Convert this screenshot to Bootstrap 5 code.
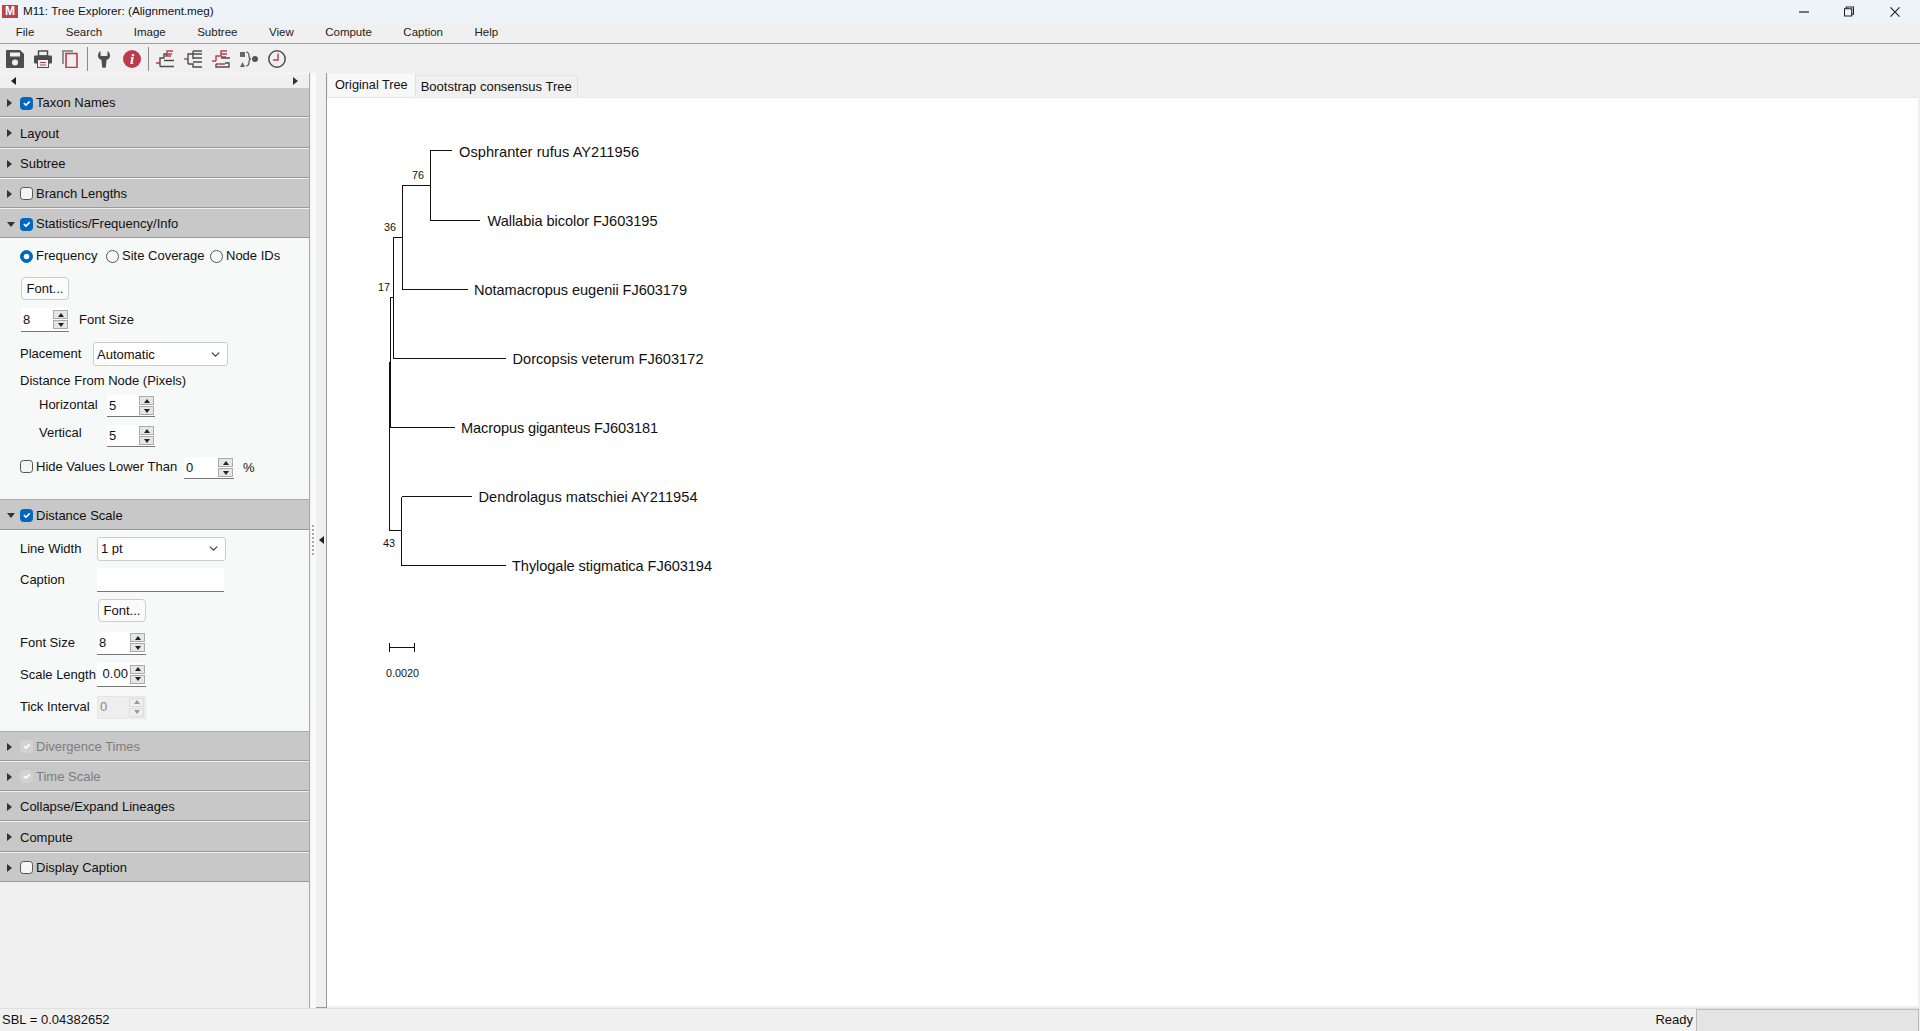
<!DOCTYPE html>
<html lang="en">
<head>
<meta charset="utf-8">
<title>M11: Tree Explorer</title>
<link href="https://cdn.jsdelivr.net/npm/bootstrap@5.3.0/dist/css/bootstrap.min.css" rel="stylesheet">
<style>
html,body{height:100%;margin:0}
body{width:1920px;height:1031px;overflow:hidden;background:#f0f0f0;color:#111;font-family:"Liberation Sans",sans-serif;font-size:13px;line-height:1.2}
.titlebar{height:23px;background:#eef3fa;font-size:11.7px}
.applogo{width:16px;height:13px;margin-left:2px;margin-right:5px;background:#b9434b;color:#fff;font:bold 12px/13px "Liberation Sans",sans-serif;text-align:center}
.winctl{padding-right:20px;gap:35px}
.restoreicon{margin-right:1px}
.menubar{height:21px;border-bottom:1.5px solid #a0a0a0;padding-left:0}
.menubar .nav-link{padding:0 15.75px;color:#222;font-size:11.5px}
.toolrow{height:29px;padding-left:6px;gap:10px}
.toolsep{width:1px;height:24px;background:#888;margin:0 -3px}
.workspace{height:935px}
.sidepane{width:310px;border-right:1.5px solid #aaa}
.hscroll{height:15px;padding:0 11px;background:#f0f0f0;border-top:1px solid #f8f8f8}
.arr-l{border-style:solid;border-width:4px 5px 4px 0;border-color:transparent #222 transparent transparent}
.arr-r{border-style:solid;border-width:4px 0 4px 5px;border-color:transparent transparent transparent #333}
.arr-d{border-style:solid;border-width:5px 4px 0 4px;border-color:#333 transparent transparent transparent}
.panelhead{height:29.25px;margin-bottom:1px;background:#c8c8c8;border-bottom:1.5px solid #999;padding-left:7px;padding-top:2px;font-size:13px}
.panelhead .twist{width:13px;flex:none}
.panelhead .form-check-input{margin-right:3px}
.panelhead.dim{color:#7d7d7d}
.form-check-input{width:13px;height:13px;margin:0;flex:none;border:1px solid #555;border-radius:3px;background-color:#f5f5f5}
.form-check-input[type=radio]{border-radius:50%;background-color:#f8f8f8}
.form-check-input:checked{background-color:#0067c0;border-color:#0067c0}
.form-check-input:disabled{opacity:1;background-color:#d2d2d2;border-color:#d2d2d2}
.panelbody{background:#f7f9f9;border-bottom:1px solid #aaa;padding-left:20px;font-size:13px}
.statbody{padding-top:8px;height:262px}
.distbody{padding-top:7px;height:202px}
.rowh{height:24px}
.rowg{height:22px}
.rowf{height:23px}
.gaplabel{margin-left:3px}
.fontbtn{width:48px;height:23px;padding:0;font-size:13px;line-height:1;background:#fbfbfb;border:1px solid #ccc;border-radius:4px;color:#111}
.spinbox{height:100%;background:#fff;border-bottom:1.5px solid #777;padding:0 1px 0 2px}
.spinbox.off{background:#eee;border:1px solid #e6e6e6;color:#888}
.spinval{flex:1;font-size:13px}
.spinbtns{width:15px;height:19px;gap:1px}
.spinbtn{flex:1;background:#e6e6e6;border:1px solid #aaa;display:flex;align-items:center;justify-content:center}
.off .spinbtn{border-color:#ddd;background:#eee}
.tup{border-style:solid;border-width:0 3px 4px 3px;border-color:transparent transparent #222 transparent}
.tdn{border-style:solid;border-width:4px 3px 0 3px;border-color:#222 transparent transparent transparent}
.off .tup{border-bottom-color:#999}.off .tdn{border-top-color:#999}
.form-select{height:100%;min-height:0;padding:0 0 0 3px;font-size:13px;color:#111;border:1px solid #ccc;border-radius:3px;background-position:right 6px center;background-size:11px 9px;line-height:1}
.capinput{width:127px;height:100%;background:#fff;border-bottom:1.5px solid #777}
.splitter{width:17px;padding-left:1px}
.griprail{flex:0 0 5px;height:100%;background:#fafafa;position:relative}
.gripdots{position:absolute;top:452px;left:1px;width:2px;height:32px;background:repeating-linear-gradient(#a8a8a8 0 2px,transparent 2px 4px)}
.sashbar{flex:0 0 11px;background:#f0f0f0;border-right:1.5px solid #999;border-bottom:1.5px solid #999}
.mainpane{flex:1;min-width:0;padding-right:2px;padding-bottom:2px}
.tabrow{height:24px;border:0;padding-left:1px;align-items:flex-end}
.tabrow .nav-link{padding:0 5px;border-radius:0;border:0;font-size:13px;color:#111;height:22px;line-height:22px;background:#f0f0f0;margin:0;border-right:1px solid #e0e0e0;border-top:1px solid #e6e6e6}
.tabrow .nav-link.active{height:24px;line-height:22px;padding:0 7px;background:#f8f8f8;border-top:1px solid #f4f4f4;border-right:1px solid #e0e0e0;color:#111;font-size:12.7px}
.treecanvas{flex:1;background:#fff;border-top:1px solid #e8e8e8;overflow:hidden}
.treecanvas svg{display:block}
.tlabel{font:14.6px "Liberation Sans",sans-serif;fill:#111}
.nlabel{font:10.8px "Liberation Sans",sans-serif;fill:#111}
.statusrow{height:23px;border-top:1.5px solid #e0e0e0;font-size:13px;padding-left:2px}
.statusrow .readytxt{margin-left:auto;margin-right:3px}
.statusfill{width:223px;height:100%;background:#e4e4e4;border:1px solid #bbb;margin-right:1px;border-bottom:0}
.lw68{width:68px}.lw77{flex:0 0 77px}
.up3{margin-bottom:3px}.up6{margin-bottom:6px}
.gl{stroke:#222;stroke-width:1.25;fill:none}
.tk{stroke:#4d4d4d;stroke-width:1.4;fill:none}
.tr{stroke:#b93e4c;stroke-width:1.4;fill:none}
.crisp{shape-rendering:crispEdges}
</style>
</head>
<body class="d-flex flex-column">

<div class="titlebar d-flex align-items-center">
  <span class="applogo">M</span>
  <span>M11: Tree Explorer: (Alignment.meg)</span>
  <div class="winctl d-flex align-items-center ms-auto">
    <svg width="10" height="10" viewBox="0 0 10 10"><path class="gl" d="M0 5h10"/></svg>
    <svg class="restoreicon" width="10" height="11" viewBox="0 0 11 11"><path class="gl" d="M.5 2.500h8v8h-8zM2.500 2.500V.5h8v8h-2"/></svg>
    <svg width="10" height="10" viewBox="0 0 11 11"><path class="gl" d="M.5.5l10 10M10.500.5l-10 10"/></svg>
  </div>
</div>

<nav class="menubar nav flex-nowrap align-items-center">
  <a class="nav-link" href="#">File</a><a class="nav-link" href="#">Search</a><a class="nav-link" href="#">Image</a><a class="nav-link" href="#">Subtree</a><a class="nav-link" href="#">View</a><a class="nav-link" href="#">Compute</a><a class="nav-link" href="#">Caption</a><a class="nav-link" href="#">Help</a>
</nav>

<div class="toolrow d-flex align-items-center">
  <svg width="18" height="18" viewBox="0 0 18 18"><path fill="#4d4d4d" d="M1 0h13l4 4v13a1 1 0 0 1-1 1H1a1 1 0 0 1-1-1V1a1 1 0 0 1 1-1z"/><rect x="4" y="2.500" width="10" height="4" fill="#f0f0f0"/><circle cx="9" cy="12.500" r="3" fill="#f0f0f0"/></svg>
  <svg width="18" height="18" viewBox="0 0 18 18"><rect x="4.500" y="1" width="9" height="5" fill="none" stroke="#4d4d4d" stroke-width="1.500"/><rect y="5.500" width="18" height="8" rx="1" fill="#4d4d4d"/><rect x="3.500" y="9.500" width="11" height="8" fill="#f0f0f0" stroke="#4d4d4d"/><path d="M6 12.500h6M6 15h6" stroke="#b93e4c" stroke-width="1.200"/></svg>
  <svg width="18" height="18" viewBox="0 0 18 18"><path d="M11 1H1v13" fill="none" stroke="#777" stroke-width="1.500"/><rect x="4" y="3.500" width="11" height="14" fill="none" stroke="#b93e4c" stroke-width="1.600"/></svg>
  <span class="toolsep"></span>
  <svg width="18" height="18" viewBox="0 0 18 18"><path fill="#4d4d4d" d="M5.500 1C3.500 2 3 4 3 6c0 2 1.500 3 3.500 4L7 16a2 2 0 0 0 4 0l.5-6c2-1 3.500-2 3.500-4 0-2-.5-4-2.500-5v4a1 1 0 0 1-1 1h-5a1 1 0 0 1-1-1z"/></svg>
  <svg width="18" height="18" viewBox="0 0 18 18"><circle cx="9" cy="9" r="9" fill="#bb3b4c"/><text x="9" y="14" text-anchor="middle" fill="#fff" font-family="Liberation Serif, serif" font-style="italic" font-weight="700" font-size="15">i</text></svg>
  <span class="toolsep"></span>
  <svg width="18" height="18" viewBox="0 0 18 18"><path class="tr" d="M0 13h4M11 5.500V1h6M11 4h5M9 6h6"/><path class="tk" d="M4 16.500V8h4V4h3M4 16.500h14M8 10.500h10"/></svg>
  <svg width="18" height="18" viewBox="0 0 18 18"><path class="tr" d="M0 9h4"/><path class="tk" d="M4 14V4h5M4 14h5v3h9M9 1v8M9 1h9M9 4h9M9 8h9M9 12h9"/></svg>
  <svg width="18" height="18" viewBox="0 0 18 18"><path class="tr" d="M0 11h4M4 11V6h5V1h6M9 4h6M9 7h5M4 14h9"/><path class="tk" d="M4 14v3h13v-4h-4M9 8h9"/></svg>
  <svg width="18" height="18" viewBox="0 0 18 18"><rect y="2" width="5" height="5" fill="#666"/><path fill="#666" d="M0 17l2.500-5 2.500 5z"/><path d="M6 2c3 0 3 2 3 4 0 2 1 3 2 3-1 0-2 1-2 3s0 4-3 4" fill="none" stroke="#555" stroke-width="1.200"/><circle cx="15" cy="9" r="3" fill="#555"/></svg>
  <svg width="18" height="18" viewBox="0 0 18 18"><circle cx="9" cy="9" r="8.200" fill="none" stroke="#4d4d4d" stroke-width="1.500"/><path class="tr" d="M10 3.500V10H5"/></svg>
</div>

<div class="workspace d-flex">
  <aside class="sidepane d-flex flex-column">
    <div class="hscroll d-flex align-items-center justify-content-between"><span class="arr-l"></span><span class="arr-r"></span></div>

    <div class="panelhead d-flex align-items-center"><span class="twist"><span class="arr-r d-block" style="width:0"></span></span><input class="form-check-input" type="checkbox" checked aria-label="Taxon Names"><span>Taxon Names</span></div>
    <div class="panelhead d-flex align-items-center"><span class="twist"><span class="arr-r d-block" style="width:0"></span></span><span>Layout</span></div>
    <div class="panelhead d-flex align-items-center"><span class="twist"><span class="arr-r d-block" style="width:0"></span></span><span>Subtree</span></div>
    <div class="panelhead d-flex align-items-center"><span class="twist"><span class="arr-r d-block" style="width:0"></span></span><input class="form-check-input" type="checkbox" aria-label="Branch Lengths"><span>Branch Lengths</span></div>
    <div class="panelhead d-flex align-items-center mb-0"><span class="twist"><span class="arr-d d-block" style="width:0"></span></span><input class="form-check-input" type="checkbox" checked aria-label="Statistics"><span>Statistics/Frequency/Info</span></div>

    <section class="panelbody statbody d-flex flex-column">
      <div class="d-flex align-items-center" style="height:20px">
        <input class="form-check-input" type="radio" name="st" checked aria-label="Frequency"><span class="gaplabel" style="width:70px">Frequency</span>
        <input class="form-check-input" type="radio" name="st" aria-label="Site Coverage"><span class="gaplabel" style="width:88px">Site Coverage</span>
        <input class="form-check-input" type="radio" name="st" aria-label="Node IDs"><span class="gaplabel">Node IDs</span>
      </div>
      <div style="height:23px;margin-top:11px;padding-left:1px"><button class="btn fontbtn" type="button">Font...</button></div>
      <div class="d-flex align-items-center rowh" style="margin-top:8px;padding-left:1px">
        <div class="spinbox d-flex align-items-center" style="width:48px"><span class="spinval">8</span><span class="spinbtns d-flex flex-column"><span class="spinbtn"><i class="tup"></i></span><span class="spinbtn"><i class="tdn"></i></span></span></div>
        <span style="margin-left:10px">Font Size</span>
      </div>
      <div class="d-flex align-items-center rowh" style="margin-top:10px">
        <span style="width:73px">Placement</span>
        <select class="form-select" style="width:135px" aria-label="Placement"><option>Automatic</option></select>
      </div>
      <div class="d-flex align-items-center" style="height:18px;margin-top:6px">Distance From Node (Pixels)</div>
      <div class="d-flex align-items-center rowg" style="margin-top:5px;padding-left:19px">
        <span class="lw68 up3">Horizontal</span>
        <div class="spinbox d-flex align-items-center" style="width:48px"><span class="spinval">5</span><span class="spinbtns d-flex flex-column"><span class="spinbtn"><i class="tup"></i></span><span class="spinbtn"><i class="tdn"></i></span></span></div>
      </div>
      <div class="d-flex align-items-center rowg" style="margin-top:8px;padding-left:19px">
        <span class="lw68 up6">Vertical</span>
        <div class="spinbox d-flex align-items-center" style="width:48px"><span class="spinval">5</span><span class="spinbtns d-flex flex-column"><span class="spinbtn"><i class="tup"></i></span><span class="spinbtn"><i class="tdn"></i></span></span></div>
      </div>
      <div class="d-flex align-items-center rowg" style="margin-top:10px">
        <input class="form-check-input up3" type="checkbox" aria-label="Hide values"><span class="gaplabel up3" style="width:148px">Hide Values Lower Than</span>
        <div class="spinbox d-flex align-items-center" style="width:50px"><span class="spinval">0</span><span class="spinbtns d-flex flex-column"><span class="spinbtn"><i class="tup"></i></span><span class="spinbtn"><i class="tdn"></i></span></span></div>
        <span style="margin-left:9px">%</span>
      </div>
    </section>

    <div class="panelhead d-flex align-items-center mb-0"><span class="twist"><span class="arr-d d-block" style="width:0"></span></span><input class="form-check-input" type="checkbox" checked aria-label="Distance Scale"><span>Distance Scale</span></div>

    <section class="panelbody distbody d-flex flex-column">
      <div class="d-flex align-items-center rowh">
        <span class="lw77">Line Width</span>
        <select class="form-select" style="width:129px" aria-label="Line Width"><option>1 pt</option></select>
      </div>
      <div class="d-flex align-items-center rowh" style="margin-top:7px">
        <span class="lw77">Caption</span><div class="capinput"></div>
      </div>
      <div class="d-flex align-items-center rowf" style="margin-top:7px;padding-left:78px"><button class="btn fontbtn" type="button">Font...</button></div>
      <div class="d-flex align-items-center rowf" style="margin-top:10px">
        <span class="lw77">Font Size</span>
        <div class="spinbox d-flex align-items-center" style="width:49px"><span class="spinval">8</span><span class="spinbtns d-flex flex-column"><span class="spinbtn"><i class="tup"></i></span><span class="spinbtn"><i class="tdn"></i></span></span></div>
      </div>
      <div class="d-flex align-items-center rowh" style="margin-top:8px">
        <span class="lw77">Scale Length</span>
        <div class="spinbox d-flex align-items-center" style="width:49px"><span class="spinval">&nbsp;0.00</span><span class="spinbtns d-flex flex-column"><span class="spinbtn"><i class="tup"></i></span><span class="spinbtn"><i class="tdn"></i></span></span></div>
      </div>
      <div class="d-flex align-items-center rowf" style="margin-top:9px">
        <span class="lw77">Tick Interval</span>
        <div class="spinbox off d-flex align-items-center" style="width:49px"><span class="spinval">0</span><span class="spinbtns d-flex flex-column"><span class="spinbtn"><i class="tup"></i></span><span class="spinbtn"><i class="tdn"></i></span></span></div>
      </div>
    </section>

    <div class="panelhead dim d-flex align-items-center"><span class="twist"><span class="arr-r d-block" style="width:0"></span></span><input class="form-check-input" type="checkbox" checked disabled aria-label="Divergence Times"><span>Divergence Times</span></div>
    <div class="panelhead dim d-flex align-items-center"><span class="twist"><span class="arr-r d-block" style="width:0"></span></span><input class="form-check-input" type="checkbox" checked disabled aria-label="Time Scale"><span>Time Scale</span></div>
    <div class="panelhead d-flex align-items-center"><span class="twist"><span class="arr-r d-block" style="width:0"></span></span><span>Collapse/Expand Lineages</span></div>
    <div class="panelhead d-flex align-items-center"><span class="twist"><span class="arr-r d-block" style="width:0"></span></span><span>Compute</span></div>
    <div class="panelhead d-flex align-items-center"><span class="twist"><span class="arr-r d-block" style="width:0"></span></span><input class="form-check-input" type="checkbox" aria-label="Display Caption"><span>Display Caption</span></div>
  </aside>

  <div class="splitter d-flex">
    <div class="griprail"><span class="gripdots"></span></div>
    <div class="sashbar d-flex align-items-center justify-content-center"><span class="arr-l"></span></div>
  </div>

  <main class="mainpane d-flex flex-column">
    <ul class="nav tabrow flex-nowrap">
      <li class="nav-item"><a class="nav-link active" href="#">Original Tree</a></li>
      <li class="nav-item"><a class="nav-link" href="#">Bootstrap consensus Tree</a></li>
    </ul>
    <div class="treecanvas">
      <svg width="700" height="620" viewBox="327 98 700 620">
        <g class="crisp" fill="none" stroke="#111" stroke-width="1">
          <path d="M452 150.500H430.500V220.500H480"/>
          <path d="M430.500 185.500H402.500M402.500 185V289.500H468"/>
          <path d="M402.500 237.500H393.500M393.500 237V358.500H506"/>
          <path d="M393.500 297.500H390.500M390.500 297V427.500H455"/>
          <path d="M389.500 362V530.500H401.500M401.500 496.500V565.500M401.500 496.500H472M401.500 565.500H506"/>
          <path d="M389.500 647.500H414.500M389.500 643V652M414.500 643V652"/>
        </g>
        <text class="tlabel" x="459" y="156.500" textLength="180">Osphranter rufus AY211956</text>
        <text class="tlabel" x="487.500" y="225.500" textLength="170">Wallabia bicolor FJ603195</text>
        <text class="tlabel" x="474" y="294.500" textLength="213">Notamacropus eugenii FJ603179</text>
        <text class="tlabel" x="512.500" y="363.500" textLength="191">Dorcopsis veterum FJ603172</text>
        <text class="tlabel" x="461" y="432.500" textLength="197">Macropus giganteus FJ603181</text>
        <text class="tlabel" x="478.500" y="501.500" textLength="219">Dendrolagus matschiei AY211954</text>
        <text class="tlabel" x="512" y="570.500" textLength="200">Thylogale stigmatica FJ603194</text>
        <text class="nlabel" x="412" y="179">76</text>
        <text class="nlabel" x="384" y="231">36</text>
        <text class="nlabel" x="378" y="291">17</text>
        <text class="nlabel" x="383" y="547">43</text>
        <text class="nlabel" x="386" y="677">0.0020</text>
      </svg>
    </div>
  </main>
</div>

<footer class="statusrow d-flex align-items-center mt-auto">
  <span>SBL = 0.04382652</span>
  <span class="readytxt">Ready</span>
  <div class="statusfill"></div>
</footer>

<script src="https://cdn.jsdelivr.net/npm/bootstrap@5.3.0/dist/js/bootstrap.bundle.min.js"></script>
</body>
</html>
